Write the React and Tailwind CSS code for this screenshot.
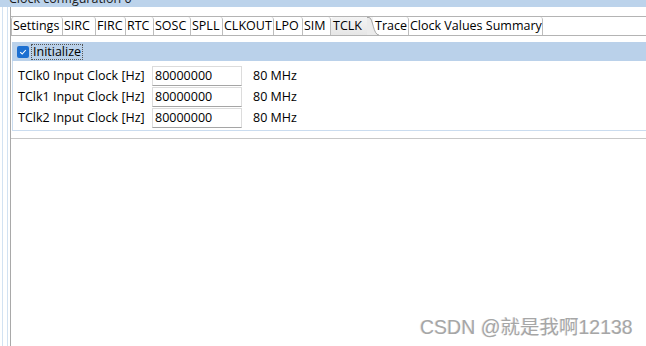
import React from "react";

const TABS = [
  { label: "Settings", w: 51 },
  { label: "SIRC", w: 33 },
  { label: "FIRC", w: 30 },
  { label: "RTC", w: 28 },
  { label: "SOSC", w: 37 },
  { label: "SPLL", w: 32 },
  { label: "CLKOUT", w: 51 },
  { label: "LPO", w: 29 },
  { label: "SIM", w: 28 },
  { label: "TCLK", w: 42, active: true },
  { label: "Trace", w: 36 },
  { label: "Clock Values Summary", w: 134 },
];

const ROWS = ["TClk0", "TClk1", "TClk2"];

const UI = { fontFamily: '"Open Sans", "Noto Sans", sans-serif' };

function Tab({ tab, afterActive }) {
  if (tab.active) {
    return (
      <div className="relative flex items-center h-full shrink-0" style={{ width: tab.w }}>
        <div className="h-full flex-1 flex items-center pl-[2px] bg-gradient-to-b from-[#f4f4f4] to-[#e6e6e6] rounded-tl-[3px]">
          {tab.label}
        </div>
        <svg width="12" height="19" viewBox="0 0 12 19" className="absolute -right-[6px] top-0">
          <path d="M0 0 H2 C6 0 6 18 12 18 H0 Z" fill="#ebebeb" />
          <path d="M0 0.5 H2 C6 0.5 6 18 12 18" fill="none" stroke="#a8a8a8" strokeWidth="1" />
        </svg>
      </div>
    );
  }
  return (
    <div
      className={`flex items-center h-full shrink-0 border-r border-[#bdbdbd] rounded-tr-[3px] ${
        afterActive ? "pl-[2px]" : "pl-[1px]"
      }`}
      style={{ width: tab.w }}
    >
      {tab.label}
    </div>
  );
}

export default function App() {
  return (
    <div className="w-[646px] h-[346px] bg-white relative overflow-hidden text-[12.5px] text-black" style={UI}>
      <div className="h-[7px] bg-[#bcd3eb] overflow-hidden">
        <div className="mt-[-9px] pl-[9px] leading-[16px] text-[#1a1a1a]">Clock configuration 0</div>
      </div>

      <div className="ml-[2px] h-[339px] border-l border-[#d2e2f2] pl-[4px]">
        <div className="h-full border-l border-[#d2e2f2] pl-[2px]">
          <div className="h-full border-l border-[#a9a9a9] pt-[9px]">
            {/* tab strip */}
            <div className="h-[20px] border-t border-b border-[#b4b4b4] flex items-stretch">
              <div className="flex h-full border-l border-[#bdbdbd] rounded-tl-[3px]">
                {TABS.map((t, i) => (
                  <Tab key={t.label} tab={t} afterActive={i > 0 && TABS[i - 1].active} />
                ))}
              </div>
            </div>

            {/* group */}
            <div className="mt-[6px] ml-[1px]">
              <div className="h-[19px] bg-[#bad1ea] flex items-center pl-[5px]">
                <span className="w-[12px] h-[12px] rounded-[2px] bg-[#1c6fd1] flex items-center justify-center">
                  <svg width="8" height="8" viewBox="0 0 8 8">
                    <path d="M1.2 4.2 L3.2 6 L6.8 2" fill="none" stroke="#fff" strokeWidth="1.1" />
                  </svg>
                </span>
                <span className="ml-[2px] px-[1px] border border-dotted border-[#555] leading-[14px]">Initialize</span>
              </div>
              <div className="border-l border-b border-[#cadcef] pl-[5px] pt-[4px] pb-[2px]">
                {ROWS.map((r) => (
                  <div key={r} className="flex items-center h-[21px]">
                    <span className="w-[134px] shrink-0 whitespace-nowrap pt-[1px]">{r} Input Clock [Hz]</span>
                    <span className="w-[90px] h-[20px] shrink-0 border border-[#dcdcdc] border-b-[#a5a5a5] pl-[2px] pt-[1px] flex items-center">
                      80000000
                    </span>
                    <span className="ml-[11px] pt-[1px]">80 MHz</span>
                  </div>
                ))}
              </div>
            </div>

            <div className="mt-[7px] border-t border-[#c8c8c8]" />
          </div>
        </div>
      </div>

      <div
        className="absolute left-[420px] top-[315px] text-[19.5px] text-[#a6a6a6] leading-[24px] whitespace-nowrap"
        style={{ fontFamily: '"Liberation Sans", "Noto Sans CJK SC", sans-serif', textShadow: "1px 1px 0 #fff, -1px 0 0 #e8e8e8" }}
      >
        CSDN @就是我啊12138
      </div>
    </div>
  );
}
